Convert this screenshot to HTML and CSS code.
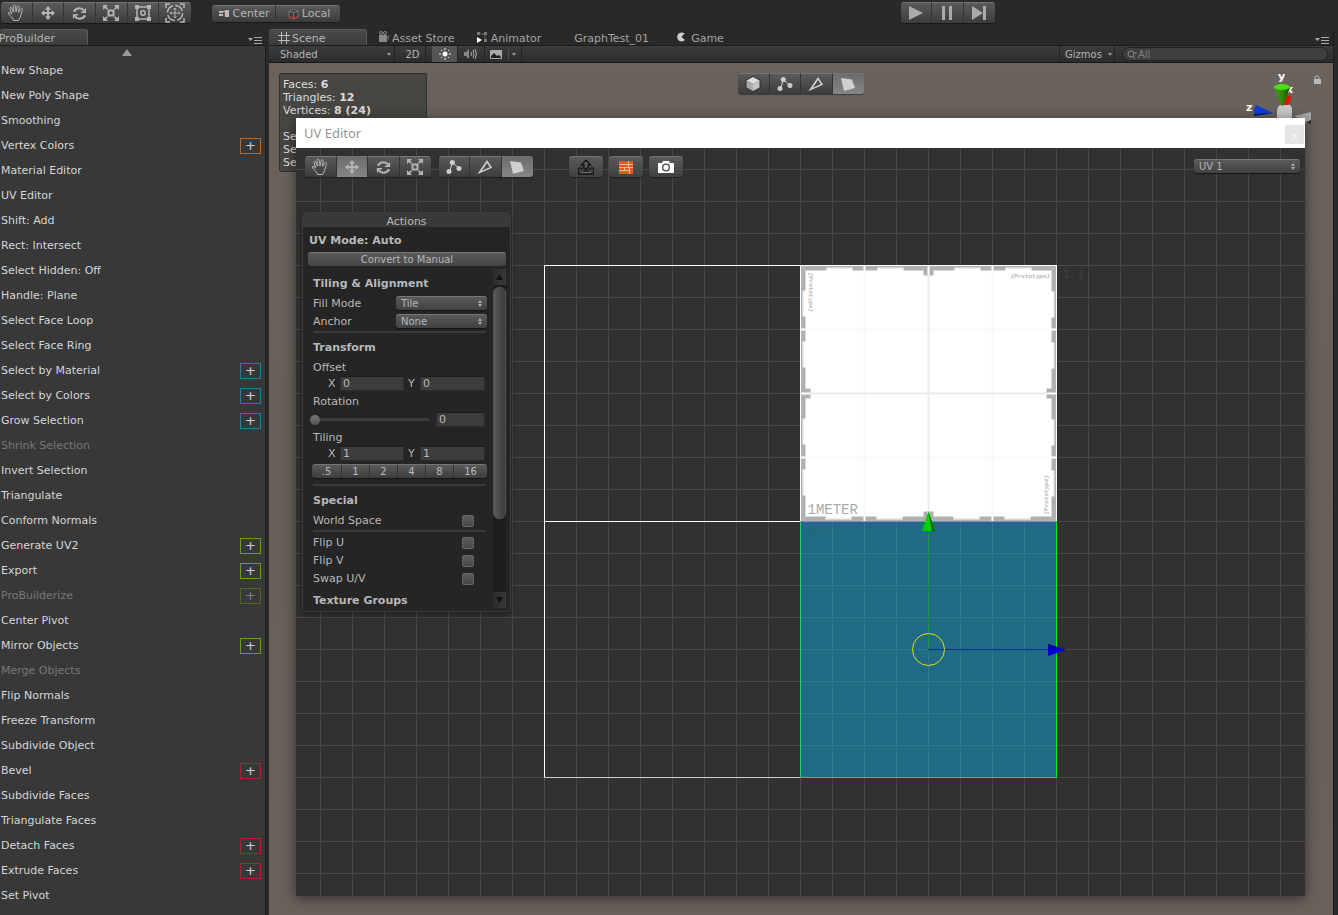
FILE: index.html
```html
<!DOCTYPE html>
<html lang="en">
<head>
<meta charset="utf-8">
<title>UV Editor</title>
<link rel="stylesheet" href="styles.css">
</head>
<body>
<svg class="sprites" aria-hidden="true">
  <symbol id="i-hand" viewBox="0 0 18 18"><path d="M6.500 16.500 L5.500 14 L1.600 10 Q.8 8.700 2 8.300 Q3 8.200 4.600 10 L2.900 4.500 Q2.900 3.200 4 3.300 Q4.800 3.500 5.200 5 L6.400 8.200 L6.200 2.300 Q6.500 1 7.500 1.200 Q8.300 1.400 8.400 2.600 L9 8 L10.200 2.500 Q10.800 1.400 11.700 1.900 Q12.400 2.400 12.100 3.600 L11.500 8.500 L13.600 5 Q14.500 4.100 15.300 4.800 Q15.800 5.400 15.200 6.600 L13.400 13 L11.500 16.500 Z" fill="none" stroke="currentColor" stroke-width="1"/></symbol>
  <symbol id="i-move" viewBox="0 0 18 18"><path d="M9 1 L12.500 5 H10.200 V7.800 H13 V5.500 L17 9 L13 12.500 V10.200 H10.200 V13 H12.500 L9 17 L5.500 13 H7.800 V10.200 H5 V12.500 L1 9 L5 5.500 V7.800 H7.800 V5 H5.500 Z" fill="currentColor"/></symbol>
  <symbol id="i-rotate" viewBox="0 0 18 18"><path d="M3 7 Q5 3.500 9 3.500 Q12 3.500 14 6 M15 11 Q13 14.500 9 14.500 Q6 14.500 4 12" fill="none" stroke="currentColor" stroke-width="2.200"/><path d="M16 3 V8.500 H10.500 V7 H13 Z M2 15 V9.500 H7.500 V11 H5 Z" fill="currentColor"/></symbol>
  <symbol id="i-scale" viewBox="0 0 18 18"><path d="M6.500 6.500 H11.500 V11.500 H6.500 Z" fill="none" stroke="currentColor" stroke-width="2"/><path d="M1 1 H6 L4.300 2.700 L6 4.400 L4.700 5.700 L3 4 L1 6 Z M17 1 H12 L13.700 2.700 L12 4.400 L13.300 5.700 L15 4 L17 6 Z M1 17 H6 L4.300 15.300 L6 13.600 L4.700 12.300 L3 14 L1 12 Z M17 17 H12 L13.700 15.300 L12 13.600 L13.300 12.300 L15 14 L17 12 Z" fill="currentColor"/></symbol>
  <symbol id="i-rect" viewBox="0 0 18 18"><path d="M3 3 H15 V15 H3 Z" fill="none" stroke="currentColor" stroke-width="1.500"/><path d="M1 1 H5 V5 H1 Z M13 1 H17 V5 H13 Z M1 13 H5 V17 H1 Z M13 13 H17 V17 H13 Z" fill="currentColor"/><circle cx="9" cy="9" r="2.200" fill="none" stroke="currentColor" stroke-width="1.500"/></symbol>
  <symbol id="i-transform" viewBox="0 0 20 20"><path d="M1 5 V1 H5 M15 1 H19 V5 M19 15 V19 H15 M5 19 H1 V15" fill="none" stroke="currentColor" stroke-width="1.500"/><circle cx="10" cy="10" r="7.500" fill="none" stroke="currentColor" stroke-width="1.500" stroke-dasharray="9.500 2.300"/><path d="M10 5 V15 M5 10 H15 M8.500 6.500 L10 5 L11.500 6.500 M8.500 13.500 L10 15 L11.500 13.500 M6.500 8.500 L5 10 L6.500 11.500 M13.500 8.500 L15 10 L13.500 11.500" fill="none" stroke="currentColor"/></symbol>
  <symbol id="i-vertex" viewBox="0 0 16 16"><path d="M3.500 12.500 L6.500 3.500 L13 9.500" fill="none" stroke="#ccc"/><circle cx="3" cy="12.500" r="2.500" fill="#ccc"/><circle cx="6.300" cy="3.500" r="2.500" fill="#ccc"/><circle cx="13" cy="9.500" r="2.500" fill="#ccc"/></symbol>
  <symbol id="i-edge" viewBox="0 0 16 16"><path d="M10 2.500 L14 8.500 L2.500 13.500 Z" fill="none" stroke="#ccc" stroke-width="1.600"/><path d="M10 2 L8 7 L2 14 Z" fill="#ccc"/></symbol>
  <symbol id="i-face" viewBox="0 0 16 16"><path d="M1 2 L12 3.500 L15 12 L4 15 Z" fill="#d0d0d0"/></symbol>
  <symbol id="i-cube" viewBox="0 0 16 16"><path d="M8 0 L15.500 4 V12 L8 16 L.5 12 V4 Z" fill="#333"/><path d="M8 1 L14.500 4.500 L8 8 L1.500 4.500 Z" fill="#ddd"/><path d="M1.500 4.500 L8 8 V15 L1.500 11.500 Z" fill="#aaa"/><path d="M14.500 4.500 L8 8 V15 L14.500 11.500 Z" fill="#c5c5c5"/></symbol>
  <symbol id="i-menu" viewBox="0 0 14 8"><path d="M0 2 H5 L2.500 5 Z" fill="#aaa"/><path d="M6 1.500 H14 M6 4.500 H14 M6 7.500 H14" stroke="#aaa"/></symbol>
  <symbol id="i-down" viewBox="0 0 4 3"><path d="M0 0 H4 L2 3 Z" fill="#999"/></symbol>
</svg>

<header class="topbar">
  <div class="group tools">
    <button aria-label="Hand"><svg width="18" height="18"><use href="#i-hand"/></svg></button>
    <button aria-label="Move"><svg width="16" height="16"><use href="#i-move"/></svg></button>
    <button aria-label="Rotate"><svg width="17" height="17"><use href="#i-rotate"/></svg></button>
    <button aria-label="Scale"><svg width="18" height="18"><use href="#i-scale"/></svg></button>
    <button aria-label="Rect"><svg width="18" height="18"><use href="#i-rect"/></svg></button>
    <button aria-label="Transform"><svg width="20" height="20"><use href="#i-transform"/></svg></button>
  </div>
  <div class="group pivot">
    <button><svg width="10" height="8" viewBox="0 0 10 8"><path d="M0 1 H4 V3 H0 Z M0 4 H4 V6 H0 Z M6 0 H10 V7 H6 Z" fill="#bbb"/><path d="M4 1.500 H7" stroke="#bbb"/><path d="M4.500 4.500 L6 3 V6 Z" fill="#c33"/></svg>Center</button>
    <button><svg width="11" height="12" viewBox="0 0 11 12"><path d="M5.500 1 L10 3 V9 L5.500 11 L1 9 V3 Z M1 3 L5.500 5 L10 3 M5.500 5 V10" fill="#3a3a3a" stroke="#777"/><path d="M1 8 L5.500 11 L10 8" fill="none" stroke="#b33" stroke-width="1.500"/></svg>Local</button>
  </div>
  <div class="group play">
    <button aria-label="Play"><svg width="14" height="14"><path d="M0 0 L14 7 L0 14 Z" fill="#aaa"/></svg></button>
    <button aria-label="Pause"><svg width="12" height="14"><path d="M1 0 H4 V14 H1 Z M8 0 H11 V14 H8 Z" fill="#aaa"/></svg></button>
    <button aria-label="Step"><svg width="14" height="14"><path d="M0 0 L11 7 L0 14 Z M11 0 H14 V14 H11 Z" fill="#aaa"/></svg></button>
  </div>
</header>

<main class="workspace">
  <aside class="dock probuilder">
    <div class="tabs"><span class="tab active">ProBuilder</span><button class="dock-menu" aria-label="Panel menu"><svg width="14" height="8"><use href="#i-menu"/></svg></button></div>
    <div class="panel">
      <button class="scroll-up" aria-label="Scroll up"><svg width="10" height="7"><path d="M5 0 L10 7 H0 Z" fill="#999"/></svg></button>
      <ul class="actions">
        <li><button>New Shape</button></li>
        <li><button>New Poly Shape</button></li>
        <li><button>Smoothing</button></li>
        <li><button>Vertex Colors</button><button class="plus orange">+</button></li>
        <li><button>Material Editor</button></li>
        <li><button>UV Editor</button></li>
        <li><button>Shift: Add</button></li>
        <li><button>Rect: Intersect</button></li>
        <li><button>Select Hidden: Off</button></li>
        <li><button>Handle: Plane</button></li>
        <li><button>Select Face Loop</button></li>
        <li><button>Select Face Ring</button></li>
        <li><button>Select by Material</button><button class="plus blue">+</button></li>
        <li><button>Select by Colors</button><button class="plus blue">+</button></li>
        <li><button>Grow Selection</button><button class="plus blue">+</button></li>
        <li class="off"><button disabled>Shrink Selection</button></li>
        <li><button>Invert Selection</button></li>
        <li><button>Triangulate</button></li>
        <li><button>Conform Normals</button></li>
        <li><button>Generate UV2</button><button class="plus green">+</button></li>
        <li><button>Export</button><button class="plus green">+</button></li>
        <li class="off"><button disabled>ProBuilderize</button><button class="plus green" disabled>+</button></li>
        <li><button>Center Pivot</button></li>
        <li><button>Mirror Objects</button><button class="plus green">+</button></li>
        <li class="off"><button disabled>Merge Objects</button></li>
        <li><button>Flip Normals</button></li>
        <li><button>Freeze Transform</button></li>
        <li><button>Subdivide Object</button></li>
        <li><button>Bevel</button><button class="plus red">+</button></li>
        <li><button>Subdivide Faces</button></li>
        <li><button>Triangulate Faces</button></li>
        <li><button>Detach Faces</button><button class="plus red">+</button></li>
        <li><button>Extrude Faces</button><button class="plus red">+</button></li>
        <li><button>Set Pivot</button></li>
      </ul>
    </div>
  </aside>

  <section class="dock scene">
    <div class="tabs">
      <span class="tab active"><svg width="12" height="12"><path d="M3.500 0 V12 M8.500 0 V12 M0 3.500 H12 M0 8.500 H12" stroke="#bbb"/></svg>Scene</span>
      <span class="tab store"><svg width="10" height="12"><path d="M0 4 H8 V11 H0 Z" fill="#888"/><circle cx="2" cy="2" r="1.500" fill="none" stroke="#888"/><circle cx="6" cy="2" r="1.500" fill="none" stroke="#888"/><path d="M8 6 L10 4 V10 Z" fill="#666"/></svg>Asset Store</span>
      <span class="tab animator"><svg width="11" height="11"><path d="M0 0 H3 V3 H0 Z M7 0 H10 V3 H7 Z M7 7 H10 V10 H7 Z" fill="#777"/><path d="M3 2 H7 M8 3 V7" stroke="#666"/><path d="M0 5 L5 8 L0 11 Z" fill="#fff"/></svg>Animator</span>
      <span class="tab graph">GraphTest_01</span>
      <span class="tab game"><svg width="9" height="10"><path d="M7.500 1.500 A4.500 4.500 0 1 0 8 8 L4.500 5 Z" fill="#ccc"/></svg>Game</span>
      <button class="dock-menu" aria-label="Panel menu"><svg width="14" height="8"><use href="#i-menu"/></svg></button>
    </div>
    <div class="scenebar">
      <button class="shaded">Shaded<svg width="4" height="3"><use href="#i-down"/></svg></button>
      <button class="twod">2D</button>
      <button class="light" aria-label="Lighting"><svg width="12" height="12" viewBox="0 0 12 12"><circle cx="6" cy="6" r="2.500" fill="#fff"/><path d="M6 0 V2 M6 10 V12 M0 6 H2 M10 6 H12 M2 2 L3 3 M9 9 L10 10 M2 10 L3 9 M9 3 L10 2" stroke="#eee"/></svg></button>
      <button class="sound" aria-label="Audio"><svg width="14" height="12"><path d="M0 4 H2 L5 1 V11 L2 8 H0 Z" fill="#888"/><path d="M7 4 Q8 6 7 8 M9 2 Q11 6 9 10 M11 1 Q14 6 11 11" fill="none" stroke="#aaa"/></svg></button>
      <button class="fx" aria-label="Effects"><svg width="12" height="9"><path d="M0 0 H12 V9 H0 Z" fill="#aaa"/><path d="M1 8 V6 L4 3 L7 6 L9 5 L11 7 V8 Z" fill="#222"/></svg><svg width="9" height="9"><path d="M.5 0 V9" stroke="#555"/><path d="M4 3 H8 L6 6 Z" fill="#999"/></svg></button>
      <button class="gizmos">Gizmos<svg width="4" height="3"><use href="#i-down"/></svg></button>
      <label class="search"><svg width="10" height="9"><circle cx="4" cy="4" r="3" fill="none" stroke="#888"/><path d="M6 6 L8 9 M7 3 H10" stroke="#888"/></svg><input type="text" placeholder="All" aria-label="Search"></label>
    </div>

    <div class="view">
      <div class="stats">
        <div>Faces: <b>6</b></div><div>Triangles: <b>12</b></div><div>Vertices: <b>8 (24)</b></div>
        <div>&nbsp;</div><div>Se</div><div>Se</div><div>Se</div>
      </div>
      <div class="group modes">
        <button aria-label="Object"><svg width="16" height="16"><use href="#i-cube"/></svg></button>
        <button aria-label="Vertex"><svg width="16" height="16"><use href="#i-vertex"/></svg></button>
        <button aria-label="Edge"><svg width="16" height="16"><use href="#i-edge"/></svg></button>
        <button class="on" aria-label="Face"><svg width="16" height="16"><use href="#i-face"/></svg></button>
      </div>
      <svg class="gizmo" width="80" height="60" viewBox="0 0 80 60">
        <defs><linearGradient id="cone"><stop offset="0" stop-color="#3a9c10"/><stop offset=".5" stop-color="#2f8a0a"/><stop offset="1" stop-color="#174f04"/></linearGradient></defs>
        <text x="32" y="13">y</text><text x="40" y="26">x</text><text x="0" y="44">z</text>
        <path d="M37 39 L41 28 L45 29 V34 L41 39 Z" fill="#d81a0a"/>
        <path d="M48 49 L65 45 V58 Z" fill="#a8a8a8"/><path d="M60 55 L65 53 V58 Z" fill="#333"/>
        <path d="M32 40 L34 38 H44 L46 41 V56 H31 V44 Z" fill="#c9c9c9"/>
        <path d="M27 46 L10 38 L8 42 L8 49 Z" fill="#123cd8"/><path d="M27 46 L8 49 V47 Z" fill="#061a6a"/>
        <path d="M28 21 L36 39 L37 39 L44 21 Z" fill="url(#cone)"/><ellipse cx="36" cy="20" rx="8" ry="3" fill="#4ddb12"/>
        <path d="M69 12 V10 Q71 7 73 10 V12" fill="none" stroke="#bbb"/><path d="M68 12 H75 V17 H68 Z" fill="#bbb"/>
      </svg>

      <div class="uv-window">
        <div class="titlebar"><span>UV Editor</span><button aria-label="Close">x</button></div>
        <div class="uv-canvas">
          <svg class="uv-drawing" width="1009" height="748" viewBox="-504 -373 1009 748">
            <defs>
              <g id="side" fill="#b0b0b0">
                <path d="M-128 -128 H128 L123 -123 H-123 Z"/>
                <path d="M-5 -124 H5 V-118 H-5 Z"/>
                <path d="M-102 -126 h26 v4 h-26 Z M-51 -126 h26 v4 h-26 Z M26 -126 h26 v4 h-26 Z M77 -126 h26 v4 h-26 Z" fill="#fff"/>
                <path d="M-102 -125.500 h26 M-51 -125.500 h26 M26 -125.500 h26 M77 -125.500 h26" stroke="#d4d4d4"/>
                <path d="M-64 -128 V-122 M0 -128 V-118 M64 -128 V-122" stroke="#fff" stroke-width="2"/>
              </g>
            </defs>
            <g transform="translate(128.500 -127.500)">
              <path d="M-128 -128 H128 V128 H-128 Z" fill="#fff"/>
              <path d="M-64 -120 V120 M64 -120 V120 M-120 -64 H120 M-120 64 H120" stroke="#f7f7f7" stroke-width="2"/>
              <path d="M0 -120 V120 M-120 0 H120" stroke="#ececec" stroke-width="2"/>
              <use href="#side"/><use href="#side" transform="rotate(90)"/><use href="#side" transform="rotate(180)"/><use href="#side" transform="rotate(270)"/>
              <text class="meter" x="-121" y="120">1METER</text>
              <text class="proto" x="82" y="-116">{Prototype}</text>
              <text class="proto" transform="translate(119 121) rotate(-90)">{Prototype}</text>
              <text class="proto" transform="translate(-120 -121) rotate(90)">{Prototype}</text>
            </g>
            <path d="M0 0 H256 V256 H0 Z" fill="#1f6b83"/>
            <path d="M32.500 0 V256 M64.500 0 V256 M96.500 0 V256 M128.500 0 V256 M160.500 0 V256 M192.500 0 V256 M224.500 0 V256 M0 32.500 H256 M0 64.500 H256 M0 96.500 H256 M0 128.500 H256 M0 160.500 H256 M0 192.500 H256 M0 224.500 H256" stroke="#2f788f"/>
            <path d="M-255.500 256.500 V-255.500 H256.500 V0 M0.500 -255.500 V0.500 M-255.500 .5 H0.500" fill="none" stroke="#fff"/>
            <path d="M-255.500 256.500 H0" stroke="#ccc"/>
            <path d="M.5 0 V256.500 H256" fill="none" stroke="#12dc64"/>
            <path d="M0 .5 H256.500 V257" fill="none" stroke="#00f000"/>
            <text x="263" y="-243" fill="#414141">1, 1</text>
            <text x="7" y="14" fill="#2a6379">0, 0</text>
            <path d="M128.500 0 V128" stroke="#0f9a35"/><path d="M128 128.500 H248" stroke="#0c2c98"/>
            <path d="M128.500 -10 L135 10 H122 Z" fill="#0c0"/><path d="M128.500 -10 L135 10 H132 Z" fill="#096a09"/>
            <path d="M266 129 L248 123 V135 Z" fill="#0000d0"/><path d="M266 129 L248 123 V125 Z" fill="#000080"/>
            <circle cx="128.500" cy="128.500" r="16" fill="none" stroke="#dede20"/>
          </svg>

          <div class="uv-toolbar">
            <div class="group uv-tools">
              <button aria-label="Pan"><svg width="18" height="18"><use href="#i-hand"/></svg></button>
              <button class="on" aria-label="Move"><svg width="16" height="16"><use href="#i-move"/></svg></button>
              <button aria-label="Rotate"><svg width="17" height="17"><use href="#i-rotate"/></svg></button>
              <button aria-label="Scale"><svg width="18" height="18"><use href="#i-scale"/></svg></button>
            </div>
            <div class="group uv-modes">
              <button aria-label="Vertex"><svg width="16" height="16"><use href="#i-vertex"/></svg></button>
              <button aria-label="Edge"><svg width="16" height="16"><use href="#i-edge"/></svg></button>
              <button class="on" aria-label="Face"><svg width="16" height="16"><use href="#i-face"/></svg></button>
            </div>
            <div class="uv-extras">
              <button aria-label="Export"><svg width="16" height="16"><path d="M8 1 L12.500 6 H10 V8 L13 11 M8 1 L3.500 6 H6 V8 L3 11 M.5 9 V15 H15.500 V9 M.5 9 H3 M13 9 H15.500 M5 12.500 H7 V9.500 H9 V12.500 H11" fill="none" stroke="#161616" stroke-width="1.300"/><path d="M8 3 V8 M3.500 13.500 H12.500" stroke="#777"/></svg></button>
              <button aria-label="Texture"><svg width="14" height="13"><path d="M0 0 H14 V13 H0 Z" fill="#f4511e"/><path d="M0 3.500 H9 M9.500 0 V6 M9 3.500 H14 M0 6.500 H14 M5.500 6 V10 M0 9.500 H10 M10.500 6 V13" fill="none" stroke="#f3b9a4"/></svg></button>
              <button aria-label="Capture"><svg width="16" height="12"><path d="M0 2 H4 L5 0 H11 L12 2 H16 V12 H0 Z" fill="#fff"/><circle cx="8" cy="6.500" r="3.300" fill="#fff" stroke="#444" stroke-width="1.300"/></svg></button>
            </div>
            <span class="pop channel"><select aria-label="UV channel"><option>UV 1</option></select></span>
          </div>

          <section class="uv-actions">
            <h2>Actions</h2>
            <div class="head">
              <strong>UV Mode: Auto</strong>
              <button class="convert">Convert to Manual</button>
            </div>
            <div class="scroller">
              <form class="fields">
                <h3>Tiling &amp; Alignment</h3>
                <div class="row"><label for="fill">Fill Mode</label><span class="pop"><select id="fill"><option>Tile</option></select></span></div>
                <div class="row"><label for="anchor">Anchor</label><span class="pop"><select id="anchor"><option>None</option></select></span></div>
                <hr>
                <h3>Transform</h3>
                <div class="caption">Offset</div>
                <div class="xy"><label for="ox">X</label><input id="ox" type="text" value="0"><label for="oy">Y</label><input id="oy" type="text" value="0"></div>
                <label class="caption gap" for="rot">Rotation</label>
                <div class="rotation"><input id="rot" type="range" min="0" max="360" value="0"><input type="text" value="0" aria-label="Rotation value"></div>
                <div class="caption gap">Tiling</div>
                <div class="xy"><label for="tx">X</label><input id="tx" type="text" value="1"><label for="ty">Y</label><input id="ty" type="text" value="1"></div>
                <div class="group presets"><button type="button">.5</button><button type="button">1</button><button type="button">2</button><button type="button">4</button><button type="button">8</button><button type="button">16</button></div>
                <hr class="wide">
                <h3>Special</h3>
                <div class="row"><label for="ws">World Space</label><input id="ws" type="checkbox"></div>
                <hr>
                <div class="row"><label for="fu">Flip U</label><input id="fu" type="checkbox"></div>
                <div class="row"><label for="fv">Flip V</label><input id="fv" type="checkbox"></div>
                <div class="row"><label for="su">Swap U/V</label><input id="su" type="checkbox"></div>
                <h3 class="last">Texture Groups</h3>
              </form>
              <div class="scrollbar">
                <button aria-label="Scroll up"><svg width="7" height="6"><path d="M3.500 0 L7 6 H0 Z" fill="#111"/></svg></button>
                <div class="track"><div class="thumb"></div></div>
                <button aria-label="Scroll down"><svg width="7" height="6"><path d="M3.500 6 L7 0 H0 Z" fill="#111"/></svg></button>
              </div>
            </div>
          </section>
        </div>
      </div>
    </div>
  </section>
</main>
</body>
</html>
```
FILE: styles.css
```css
* { box-sizing: border-box; }
body {
  margin: 0;
  height: 100vh;
  overflow: hidden;
  display: flex;
  flex-direction: column;
  background: #292929;
  color: #b4b4b4;
  font: 11px/18px "DejaVu Sans", Verdana, sans-serif;
}
.sprites { position: absolute; width: 0; height: 0; }
svg { display: block; flex: none; }
button, input, select { font: inherit; color: inherit; margin: 0; padding: 0; border: 0; background: none; }
h2, h3, ul { margin: 0; padding: 0; list-style: none; font-size: 11px; }

/* Segmented button groups */
.group { display: grid; grid-auto-flow: column; grid-auto-columns: 1fr; height: 21px; border-radius: 3px; box-shadow: 0 1px 1px #0006; overflow: hidden; }
.group button {
  display: flex; align-items: center; justify-content: center;
  color: #b4b4b4;
  background: linear-gradient(#5a5a5a, #3c3c3c);
  border-top: 1px solid #747474;
  border-right: 1px solid #333;
}
.group button:last-child { border-right: 0; }
.group .on { background: linear-gradient(#6c6c6c, #868686); }

.topbar { flex: none; height: 27px; display: flex; align-items: flex-start; padding: 2px 0 0 1px; position: relative; }
.tools { width: 190px; }
.pivot { width: 128px; height: 17px; margin: 3px 0 0 21px; line-height: 16px; }
.pivot button { gap: 3px; border-top: 0; padding-left: 2px; box-shadow: inset 0 1px #747474; }
.play { width: 94px; position: absolute; left: 50%; margin-left: 232px; }

.workspace { flex: 1; min-height: 0; display: flex; gap: 3px; padding: 2px 4px 0 0; }
.dock { display: flex; flex-direction: column; min-height: 0; }
.probuilder { width: 266px; }
.scene { flex: 1; min-width: 0; border-right: 1px solid #1c1c1c; }
.tabs { flex: none; height: 17px; display: flex; align-items: stretch; border-bottom: 1px solid #1c1c1c; color: #a4a4a4; }
.tab { display: flex; align-items: center; gap: 3px; line-height: 17px; padding-top: 2px; }
.tab svg { margin-top: -2px; }
.tab.active { background: linear-gradient(#4a4a4a, #3c3c3c); border: solid #5a5a5a; border-width: 1px 1px 0 0; border-radius: 3px 3px 0 0; color: #b4b4b4; }
.probuilder .active { width: 88px; justify-content: flex-end; padding-right: 32px; }
.scene .active { width: 98px; padding-left: 9px; gap: 2px; }
.store { margin-left: 12px; }
.animator { margin-left: 22px; }
.graph { margin-left: 33px; }
.game { margin-left: 28px; gap: 5px; }
.dock-menu { margin: 6px 4px 0 auto; align-self: center; }

.panel { flex: 1; min-height: 0; overflow: hidden; background: #383838; border-right: 1px solid #1c1c1c; }
.scroll-up { display: flex; justify-content: center; align-items: center; width: 254px; height: 12px; }
.actions li { height: 25px; display: flex; align-items: center; justify-content: space-between; padding: 0 4px 0 1px; color: #d6d6d6; }
.actions .off { color: #777; }
.plus { width: 21px; height: 16px; border: 1px solid; font-size: 13px; line-height: 12px; }
.plus::first-line { color: #d0d0d0; }
.off .plus::first-line { color: #808080; }
.orange { border-color: #b5682a; }
.blue { border-color: #1f7da8; }
.green { border-color: #6a9c1c; }
.off .green { border-color: #4b6a1f; }
.red { border-color: #b3202e; }

.scenebar { flex: none; height: 17px; display: flex; background: linear-gradient(#3c3c3c, #2c2c2c); border-bottom: 1px solid #181818; font-size: 10px; line-height: 15px; }
.scenebar button { display: flex; align-items: center; justify-content: center; gap: 6px; border-right: 1px solid #222; }
.scenebar .shaded { width: 126px; justify-content: space-between; padding: 0 3px 0 11px; }
.scenebar .twod { width: 26px; margin-left: 5px; }
.scenebar .light { width: 26px; background: #555; margin-left: 6px; }
.sound { width: 27px; }
.fx { width: 37px; }
.scenebar .gizmos { margin-left: auto; width: 56px; padding-left: 3px; border-left: 1px solid #222; }
.search { width: 206px; height: 14px; margin: 1px 5px 0 7px; border-radius: 7px; border: 1px solid #222; background: #3f3f3f; display: flex; align-items: center; gap: 1px; padding-left: 4px; }
.search input { width: 100%; height: 12px; outline: 0; }
.search input::placeholder { color: #808080; opacity: 1; }

.view { flex: 1; position: relative; background: linear-gradient(#6a625d, #67605a 50%, #6a605c); overflow: hidden; }
.stats { position: absolute; left: 10px; top: 10px; width: 148px; height: 99px; padding: 4px 3px; line-height: 13px; color: #ddd; background: #484643; border: 1px solid #33312f; border-radius: 2px; overflow: hidden; }
.modes { position: absolute; left: 44%; top: 10px; width: 126px; margin-left: 1px; }
.gizmo { position: absolute; right: 7px; top: 4px; overflow: visible; font-weight: bold; fill: #fff; }

/* Floating editor window */
.uv-window { position: absolute; inset: 55px 28px 19px 27px; display: flex; flex-direction: column; box-shadow: 0 2px 12px #0008; background: #313131; }
.titlebar { flex: none; height: 30px; background: #fff; color: #949494; display: flex; justify-content: space-between; align-items: center; padding: 0 1px 0 8px; font: 13px/30px "Noto Sans", "Open Sans", sans-serif; }
.titlebar button { width: 19px; height: 19px; margin-top: 3px; background: #e5e5e5; color: #f8f8f8; line-height: 16px; }
.uv-canvas {
  flex: 1; min-height: 0; position: relative; overflow: hidden; padding: 8px 5px 0 9px;
  background-image: linear-gradient(90deg, #484848 1px, transparent 1px), linear-gradient(#484848 1px, transparent 1px);
  background-size: 32px 32px;
  background-position: 24px 0, 0 21px;
}
.uv-drawing { position: absolute; left: 0; top: 0; font-size: 11px; }
.meter { font: 14px "Liberation Mono", monospace; fill: #aaa; }
.proto { font: italic bold 6px "Liberation Mono", monospace; fill: #b8b8b8; }
.uv-toolbar { position: relative; display: flex; }
.uv-tools { width: 126px; }
.uv-modes { width: 94px; margin-left: 8px; }
.uv-extras { display: flex; gap: 6px; margin-left: 36px; }
.uv-extras button { width: 34px; height: 21px; display: flex; align-items: center; justify-content: center; border-radius: 3px; background: linear-gradient(#5a5a5a, #404040); border-top: 1px solid #747474; box-shadow: 0 1px 1px #0006; }
.pop { position: relative; display: block; width: 91px; height: 14px; border-radius: 3px; background: linear-gradient(#5a5a5a, #414141); border-top: 1px solid #777; box-shadow: 0 1px 1px #0008; font-size: 10px; }
.pop select { appearance: none; display: block; width: 100%; height: 13px; padding-left: 5px; line-height: 12px; }
.pop::before, .pop::after { content: ""; position: absolute; right: 5px; border: solid transparent; border-width: 0 2px; pointer-events: none; }
.pop::before { top: 3px; border-bottom: 3px solid #aaa; }
.pop::after { bottom: 3px; border-top: 3px solid #aaa; }
.pop.channel { width: 106px; margin: 3px 0 0 auto; }

.uv-actions { position: absolute; left: 6px; top: 64px; width: 209px; height: 400px; display: flex; flex-direction: column; background: #252525; border: 1px solid #3c3c3c; border-radius: 4px; box-shadow: 0 2px 6px #0006; color: #b8b8b8; overflow: hidden; }
.uv-actions h2 { flex: none; height: 14px; background: #393939; text-align: center; font-weight: normal; line-height: 17px; }
.head { padding: 5px 4px 0 5px; }
.head strong { display: block; padding-left: 1px; }
.convert { display: block; width: 100%; height: 14px; margin-top: 2px; line-height: 12px; font-size: 10px; border-radius: 3px; border-top: 1px solid #777; background: linear-gradient(#5a5a5a, #444); }
.scroller { flex: 1; min-height: 0; display: flex; margin: 3px 4px 3px 0; overflow: hidden; }
.fields { flex: 1; min-width: 0; padding: 0 7px 0 10px; }
.fields h3 { margin-top: 3px; height: 22px; line-height: 24px; }
.fields .last { margin-top: 2px; }
.row { display: flex; align-items: center; justify-content: space-between; height: 18px; }
.row label { padding-top: 2px; }
.fields .pop { margin-right: -1px; }
.fields hr { border: 0; height: 2px; margin: 1px 0; background: #3a3a3a; }
.fields hr.wide { margin-top: 6px; }
.caption { display: block; height: 18px; line-height: 20px; }
.caption.gap { margin-top: 1px; }
.xy { display: grid; grid-template-columns: 12px 64px 16px 65px; justify-content: end; height: 15px; line-height: 15px; margin-right: 1px; }
.xy label:nth-of-type(2) { padding-left: 4px; }
.fields input[type="text"] { width: 100%; min-width: 0; height: 15px; padding: 0 2px; background: #3c3c3c; border: 1px solid #2c2c2c; border-top-color: #1c1c1c; line-height: 13px; }
.rotation { display: grid; grid-template-columns: 119px 49px; justify-content: space-between; align-items: center; height: 15px; margin: 2px 1px 0 -3px; }
.rotation input[type="range"] { appearance: none; width: 100%; height: 10px; background: linear-gradient(#3c3c3c, #3c3c3c) center / 100% 3px no-repeat; }
.rotation input[type="range"]::-webkit-slider-thumb { appearance: none; width: 10px; height: 10px; border-radius: 5px; background: linear-gradient(#777, #555); }
.presets { height: 14px; margin: 3px -1px 0; grid-template-columns: 30px repeat(4, 28px) 1fr; font-size: 10px; }
.presets button { line-height: 12px; color: #bbb; }
.row input[type="checkbox"] { appearance: none; width: 12px; height: 12px; margin: 2px 12px 0 0; border-radius: 2px; background: linear-gradient(#5c5c5c, #474747); border: 1px solid #666; }
.scrollbar { width: 13px; display: flex; flex-direction: column; background: #1e1e1e; }
.scrollbar button { height: 16px; display: flex; align-items: center; justify-content: center; background: linear-gradient(90deg, #2c2c2c, #383838); }
.track { flex: 1; padding-top: 2px; }
.thumb { height: 76%; border-radius: 6px; background: linear-gradient(90deg, #5a5a5a, #3a3a3a); border: 1px solid #555; }
```
